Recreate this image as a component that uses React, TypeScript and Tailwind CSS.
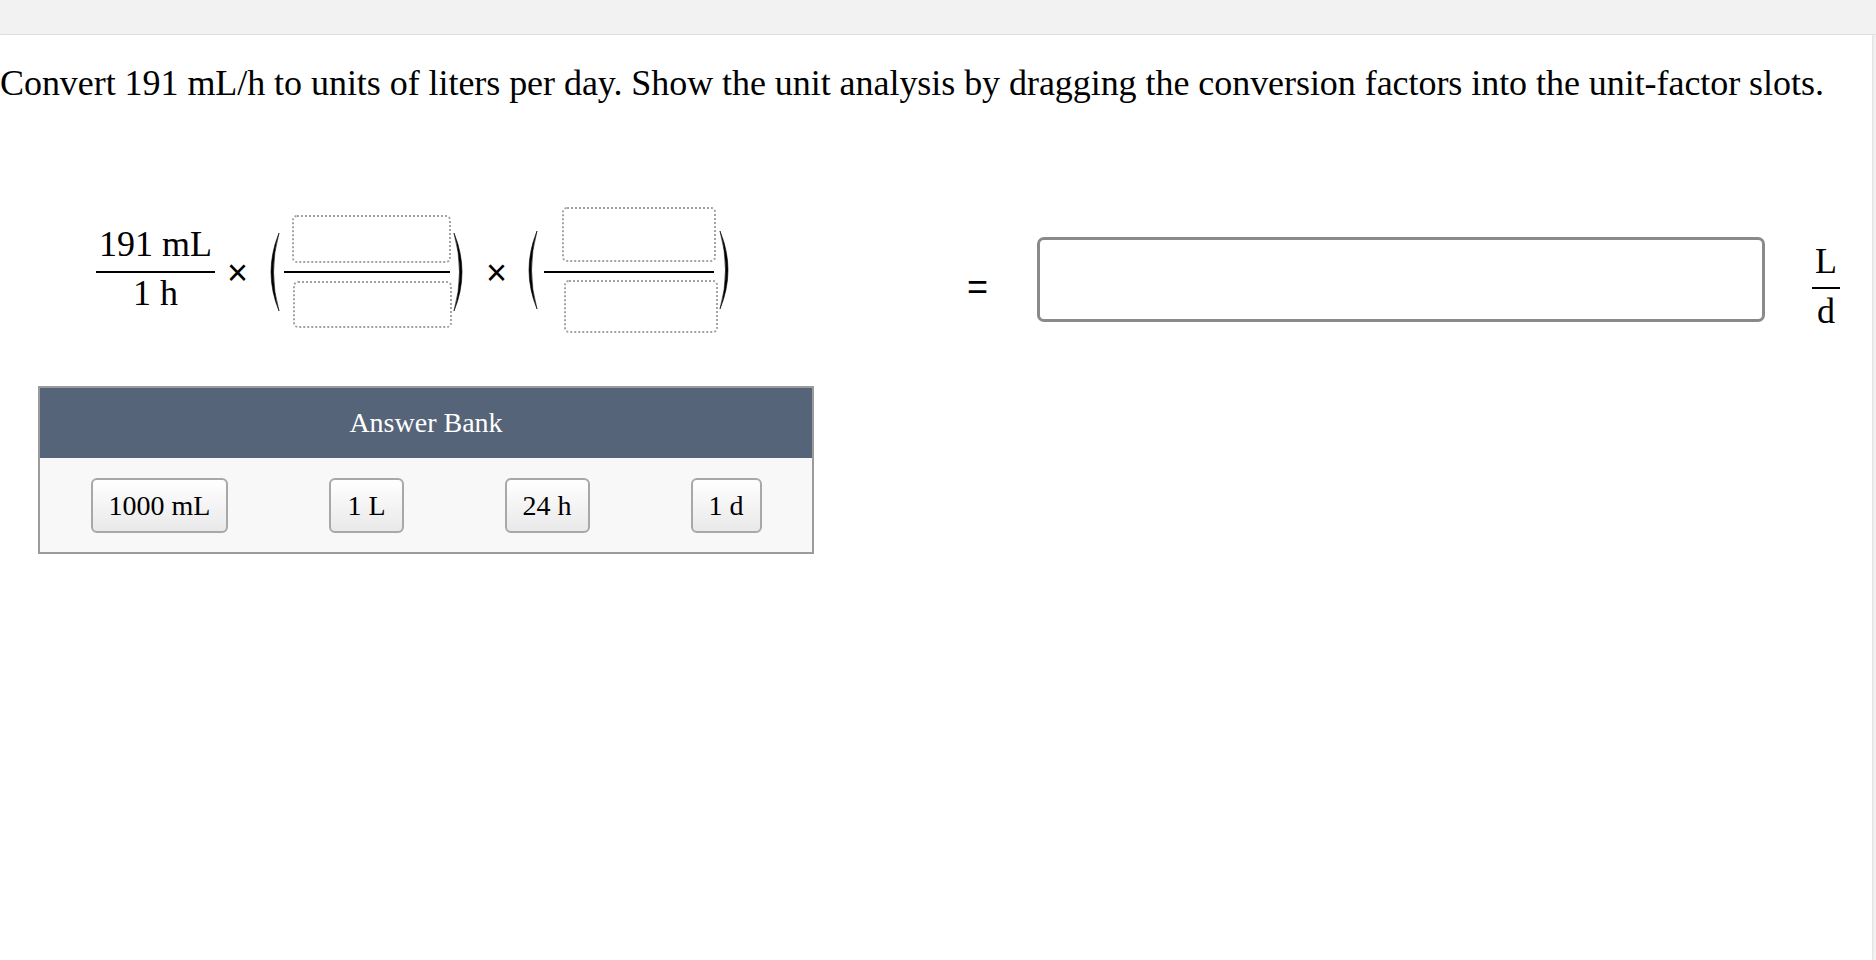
import React from "react";

function Paren({ side }: { side: "left" | "right" }) {
  const d =
    side === "left"
      ? "M 16 1 Q 0 40 16 79 Q 5 40 16 1 Z"
      : "M 2 1 Q 18 40 2 79 Q 13 40 2 1 Z";
  return (
    <svg width="18" height="80" viewBox="0 0 18 80" className="shrink-0">
      <path d={d} fill="#000" stroke="#000" strokeWidth="0.6" strokeLinejoin="round" />
    </svg>
  );
}

function Slot({ className }: { className: string }) {
  return <div className={`border-2 border-dotted border-[#a3a3a3] rounded-[5px] ${className}`} />;
}

const bank = ["1000 mL", "1 L", "24 h", "1 d"];

export default function App() {
  return (
    <div className="h-screen flex flex-col bg-[#f2f2f2] font-['Liberation_Serif',serif] text-black">
      <div className="h-[35px] shrink-0 border-b border-[#e4e4e4]" />

      <div className="flex-1 mr-[4px] bg-white shadow-[1px_0_2px_rgba(0,0,0,0.08)]">
        <p className="pt-[28px] text-[36px] leading-[41px] tracking-[-0.05px] whitespace-nowrap">
          Convert 191 mL/h to units of liters per day. Show the unit analysis by dragging the conversion factors into the unit-factor slots.
        </p>

        {/* unit analysis row */}
        <div className="mt-[96px] h-[144px] flex items-start">
          <div className="ml-[96px] mt-[24px] flex flex-col items-center text-[36px] leading-[41px]">
            <div className="px-[3px] pb-[6px] border-b-2 border-black">191 mL</div>
            <div>1 h</div>
          </div>

          <div className="ml-[12px] mt-[52px] font-['Liberation_Sans',sans-serif] text-[36px] leading-[41px]">×</div>

          <div className="ml-[15px] mt-[15px] flex items-center">
            <Paren side="left" />
            <div className="ml-[3px] flex flex-col">
              <Slot className="ml-[8px] w-[159px] h-[48px]" />
              <div className="mt-[8px] h-[2px] w-[166px] bg-black" />
              <Slot className="mt-[8px] ml-[9px] w-[159px] h-[47px]" />
            </div>
            <Paren side="right" />
          </div>

          <div className="ml-[16px] mt-[52px] font-['Liberation_Sans',sans-serif] text-[36px] leading-[41px]">×</div>

          <div className="ml-[14px] mt-[7px] flex items-center">
            <Paren side="left" />
            <div className="ml-[3px] flex flex-col">
              <Slot className="ml-[20px] w-[154px] h-[55px]" />
              <div className="mt-[9px] ml-[2px] h-[2px] w-[170px] bg-black" />
              <Slot className="mt-[7px] ml-[22px] w-[154px] h-[53px]" />
            </div>
            <Paren side="right" />
          </div>

          <div className="ml-[231px] mt-[66px] font-['Liberation_Sans',sans-serif] text-[36px] leading-[41px]">=</div>

          <div className="ml-[49px] mt-[37px] w-[728px] h-[85px] border-[3px] border-[#8a8a8a] rounded-[7px] bg-white" />

          <div className="ml-[47px] mt-[41px] flex flex-col items-center text-[36px] leading-[41px]">
            <div className="px-[3px] pb-[5px] border-b-2 border-black">L</div>
            <div className="pt-[2px]">d</div>
          </div>
        </div>

        {/* answer bank */}
        <div className="mt-[42px] ml-[38px] w-[776px] border-2 border-[#9b9b9b]">
          <div className="h-[70px] flex items-center justify-center bg-[#556479] text-white text-[28px]">
            Answer Bank
          </div>
          <div className="h-[94px] pt-[20px] flex items-start justify-around bg-[#f8f8f8]">
            {bank.map((b) => (
              <div
                key={b}
                className="h-[55px] px-[16px] flex items-center border-2 border-[#a8a8a8] rounded-[6px] bg-gradient-to-b from-white to-[#e9e9e9] text-[28px] whitespace-nowrap"
              >
                {b}
              </div>
            ))}
          </div>
        </div>
      </div>
    </div>
  );
}
